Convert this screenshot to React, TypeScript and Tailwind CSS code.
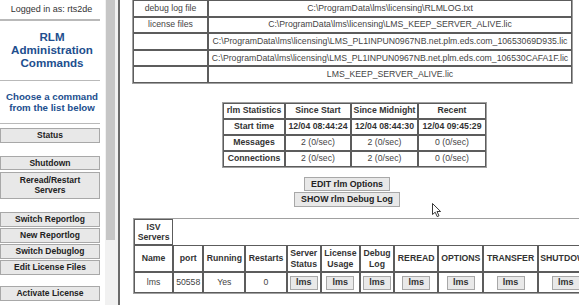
const navButton =
  'w-[100px] h-[14.5px] flex items-center justify-center border border-[#a8a8a8] bg-[#e8e8e8] text-[8.5px] font-bold text-[#222] leading-[10px]'

function NavButton({ label, className = '' }: { label: React.ReactNode; className?: string }) {
  return <div className={`${navButton} ${className}`}>{label}</div>
}

const cell = 'border border-[#5c5c5c] p-0 text-center align-middle'

function LmsButton() {
  return (
    <span className="inline-flex items-center justify-center w-[28px] h-[14px] border border-[#a8a8a8] bg-[#e9e9e9] text-[9px] font-bold text-[#333]">
      lms
    </span>
  )
}

function Cursor() {
  return (
    <svg className="absolute left-[312px] top-[203px]" width="10" height="15" viewBox="0 0 10 15">
      <path d="M0.5 0.5 L0.5 11.5 L3.2 9.2 L5.2 13.6 L7 12.8 L5 8.5 L8.6 8.5 Z" fill="#fff" stroke="#222" strokeWidth="0.9" strokeLinejoin="round" />
    </svg>
  )
}

export default function App() {
  const paths = [
    ['debug log file', 'C:\\ProgramData\\lms\\licensing\\RLMLOG.txt'],
    ['license files', 'C:\\ProgramData\\lms\\licensing\\LMS_KEEP_SERVER_ALIVE.lic'],
    ['', 'C:\\ProgramData\\lms\\licensing\\LMS_PL1INPUN0967NB.net.plm.eds.com_10653069D935.lic'],
    ['', 'C:\\ProgramData\\lms\\licensing\\LMS_PL1INPUN0967NB.net.plm.eds.com_106530CAFA1F.lic'],
    ['', 'LMS_KEEP_SERVER_ALIVE.lic'],
  ]

  const stats = [
    ['Start time', '12/04 08:44:24', '12/04 08:44:30', '12/04 09:45:29', true],
    ['Messages', '2 (0/sec)', '2 (0/sec)', '0 (0/sec)', false],
    ['Connections', '2 (0/sec)', '2 (0/sec)', '0 (0/sec)', false],
  ] as const

  const isvHeads = [
    'Name', 'port', 'Running', 'Restarts', 'Server Status', 'License Usage', 'Debug Log',
    'REREAD', 'OPTIONS', 'TRANSFER', 'SHUTDOWN',
  ]
  const isvCols = ['w-[39px]', 'w-[30px]', 'w-[42px]', 'w-[41px]', 'w-[34px]', 'w-[39px]', 'w-[34px]', 'w-[44px]', 'w-[45px]', 'w-[54px]', 'w-[56px]']

  return (
    <div className="flex w-[579px] h-[305px] overflow-hidden bg-white font-['Liberation_Sans',Arial,sans-serif]">
      {/* left frame */}
      <div className="w-[105px] flex-none flex flex-col">
        <div className="h-[19px] w-[103px] flex items-center justify-center text-[9px] text-[#333]">
          Logged in as: rts2de
        </div>
        <div className="h-[1.5px] w-[100px] bg-[#b9b9b9]" />
        <div className="mt-[9px] w-[104px] text-center text-[11.6px] leading-[13px] font-bold text-[#214e8e]">
          RLM
          <br />
          Administration
          <br />
          Commands
        </div>
        <div className="mt-[11px] h-[1.5px] w-[100px] bg-[#b9b9b9]" />
        <div className="mt-[10px] w-[104px] text-center text-[9.7px] leading-[11px] font-bold text-[#214e8e]">
          Choose a command
          <br />
          from the list below
        </div>
        <div className="mt-[9.5px] h-[1.5px] w-[100px] bg-[#b9b9b9]" />
        <NavButton label="Status" className="mt-[4px]" />
        <NavButton label="Shutdown" className="mt-[13px]" />
        <NavButton label={<span className="text-center">Reread/Restart<br />Servers</span>} className="mt-[1.5px] !h-[27.5px]" />
        <NavButton label="Switch Reportlog" className="mt-[13px]" />
        <NavButton label="New Reportlog" className="mt-[1.5px]" />
        <NavButton label="Switch Debuglog" className="mt-[1.5px]" />
        <NavButton label="Edit License Files" className="mt-[1.5px]" />
        <NavButton label="Activate License" className="mt-[11.5px]" />
      </div>

      {/* scrollbar + frame border */}
      <div className="w-[13px] flex-none bg-[#f1f1f1]">
        <div className="ml-[1px] w-[9px] h-[240px] bg-[#c6c6c6]" />
      </div>
      <div className="w-[2px] flex-none bg-[#6a6a6a]" />

      {/* right frame */}
      <div className="relative flex-1 overflow-hidden text-[8.7px] text-[#444]">
        <div className="flex flex-col w-[620px]">
          <table className="ml-[12px] -mt-[1px] table-fixed border-separate border-spacing-0 border border-[#a0a0a0] w-[441px]">
            <colgroup>
              <col className="w-[75px]" />
              <col />
            </colgroup>
            <tbody>
              {paths.map(([label, path], i) => (
                <tr key={i} className="h-[16.6px]">
                  <td className={cell}>{label}</td>
                  <td className={`${cell} whitespace-nowrap`}>{path}</td>
                </tr>
              ))}
            </tbody>
          </table>

          <table className="ml-[102px] mt-[18px] table-fixed border-separate border-spacing-0 border border-[#a0a0a0] w-[265px]">
            <colgroup>
              <col className="w-[62px]" />
              <col className="w-[66px]" />
              <col className="w-[67px]" />
              <col />
            </colgroup>
            <tbody>
              <tr className="h-[16px] font-bold text-[#333]">
                <td className={cell}>rlm Statistics</td>
                <td className={cell}>Since Start</td>
                <td className={cell}>Since Midnight</td>
                <td className={cell}>Recent</td>
              </tr>
              {stats.map(([label, a, b, c, bold]) => (
                <tr key={label} className="h-[16px]">
                  <td className={`${cell} font-bold text-[#333]`}>{label}</td>
                  {[a, b, c].map((v, j) => (
                    <td key={j} className={`${cell} whitespace-nowrap ${bold ? 'font-bold text-[#333]' : ''}`}>
                      {v}
                    </td>
                  ))}
                </tr>
              ))}
            </tbody>
          </table>

          <div className="mt-[9px] w-[454px] flex flex-col items-center gap-[1px]">
            <div className="h-[14.5px] px-[6px] flex items-center border border-[#a8a8a8] bg-[#e8e8e8] text-[8.8px] font-bold text-[#222]">
              EDIT rlm Options
            </div>
            <div className="h-[15px] px-[6px] flex items-center border border-[#a8a8a8] bg-[#e8e8e8] text-[8.8px] font-bold text-[#222]">
              SHOW rlm Debug Log
            </div>
          </div>

          <table className="ml-[13px] mt-[11px] table-fixed border-separate border-spacing-0 border border-[#a0a0a0] w-[462px] leading-[10.5px]">
            <colgroup>
              {isvCols.map((w, i) => (
                <col key={i} className={w} />
              ))}
            </colgroup>
            <tbody>
              <tr className="h-[26px]">
                <td className={`${cell} font-bold text-[#333]`}>
                  ISV
                  <br />
                  Servers
                </td>
              </tr>
              <tr className="h-[26.5px] font-bold text-[#333]">
                {isvHeads.map((h) => (
                  <td key={h} className={`${cell} px-[1px]`}>
                    {h}
                  </td>
                ))}
              </tr>
              <tr className="h-[21.5px]">
                <td className={cell}>lms</td>
                <td className={cell}>50558</td>
                <td className={cell}>Yes</td>
                <td className={cell}>0</td>
                {isvHeads.slice(4).map((h) => (
                  <td key={h} className={cell}>
                    <LmsButton />
                  </td>
                ))}
              </tr>
            </tbody>
          </table>
        </div>
        <Cursor />
      </div>
    </div>
  )
}
